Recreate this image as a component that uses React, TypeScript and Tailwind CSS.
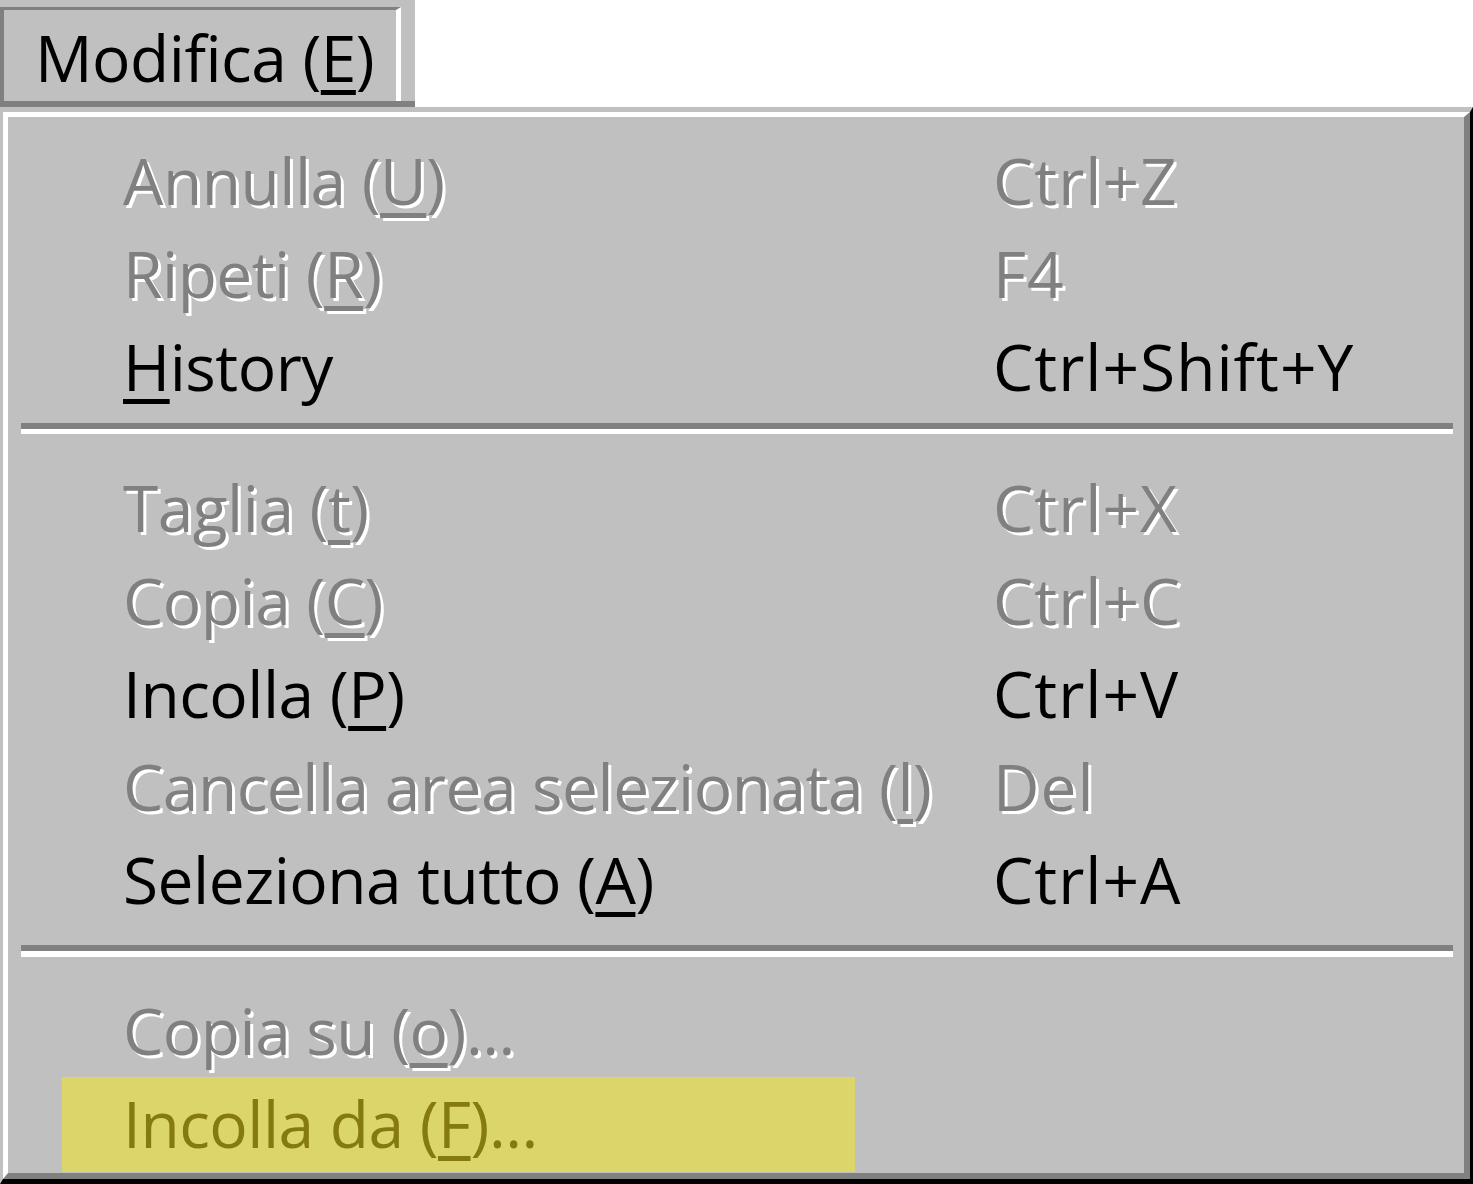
import React from "react";

type Item = {
  pre: string;
  key: string;
  post: string;
  shortcut?: string;
  disabled?: boolean;
  highlight?: boolean;
};

const group1: Item[] = [
  { pre: "Annulla (", key: "U", post: ")", shortcut: "Ctrl+Z", disabled: true },
  { pre: "Ripeti (", key: "R", post: ")", shortcut: "F4", disabled: true },
  { pre: "", key: "H", post: "istory", shortcut: "Ctrl+Shift+Y" },
];

const group2: Item[] = [
  { pre: "Taglia (", key: "t", post: ")", shortcut: "Ctrl+X", disabled: true },
  { pre: "Copia (", key: "C", post: ")", shortcut: "Ctrl+C", disabled: true },
  { pre: "Incolla (", key: "P", post: ")", shortcut: "Ctrl+V" },
  { pre: "Cancella area selezionata (", key: "l", post: ")", shortcut: "Del", disabled: true },
  { pre: "Seleziona tutto (", key: "A", post: ")", shortcut: "Ctrl+A" },
];

const group3: Item[] = [
  { pre: "Copia su (", key: "o", post: ")...", disabled: true },
  { pre: "Incolla da (", key: "F", post: ")...", disabled: true, highlight: true },
];

function Row({ item }: { item: Item }) {
  const color = item.highlight
    ? "text-[#857a12]"
    : item.disabled
    ? "text-[#808080] [text-shadow:3px_3px_0_#ffffff]"
    : "text-black";
  if (item.highlight) {
    return (
      <div className="h-[93px] leading-[93px] flex">
        <div className={`ml-[54px] w-[793px] h-[95px] bg-[#dcd66a] pl-[61px] whitespace-nowrap tracking-[-0.5px] ${color}`}>
          {item.pre}
          <span className="underline decoration-[5px] underline-offset-[8px]">{item.key}</span>
          {item.post}
        </div>
      </div>
    );
  }
  return (
    <div className={`h-[93px] leading-[93px] flex whitespace-nowrap ${color}`}>
      <div className="w-[985px] pl-[115px] shrink-0 tracking-[-0.5px]">
        {item.pre}
        <span className="underline decoration-[5px] underline-offset-[8px]">{item.key}</span>
        {item.post}
      </div>
      {item.shortcut && <div className="tracking-[1px]">{item.shortcut}</div>}
    </div>
  );
}

function Separator({ top, whiteH }: { top: string; whiteH: string }) {
  return (
    <div className={`${top} pb-[27px] pl-[13px] pr-[11px]`}>
      <div className="h-[6px] bg-[#808080]" />
      <div className={`${whiteH} bg-white`} />
    </div>
  );
}

export default function App() {
  return (
    <div
      className="w-[1473px] h-[1184px] bg-white overflow-hidden text-[64px]"
      style={{ fontFamily: '"Open Sans", "Noto Sans", sans-serif' }}
    >
      {/* Menu bar button */}
      <div className="w-[415px] h-[107px] bg-[#c0c0c0] pt-[7px] flex flex-col">
        <div className="w-[401px] h-[94px] border-t-[3px] border-l-[4px] border-[#808080] border-r-[5px] border-r-white pl-[31px] pt-[2px] leading-[91px] text-black whitespace-nowrap tracking-[-0.5px]">
          Modifica (<span className="underline decoration-[5px] underline-offset-[8px]">E</span>)
        </div>
        <div className="h-[6px] bg-[#808080]" />
      </div>

      {/* Dropdown menu */}
      <div className="w-[1473px] h-[1077px] border-t-[5px] border-l-[3px] border-[#c0c0c0] border-r-[3px] border-b-[5px] border-r-black border-b-black">
        <div className="h-full border-t-[5px] border-l-[5px] border-white border-r-[6px] border-b-[6px] border-r-[#808080] border-b-[#808080] bg-[#c0c0c0] pt-[17px]">
          {group1.map((it, i) => (
            <Row key={i} item={it} />
          ))}
          <Separator top="pt-[10px]" whiteH="h-[5px]" />
          {group2.map((it, i) => (
            <Row key={i} item={it} />
          ))}
          <Separator top="pt-[19px]" whiteH="h-[6px]" />
          {group3.map((it, i) => (
            <Row key={i} item={it} />
          ))}
        </div>
      </div>
    </div>
  );
}
